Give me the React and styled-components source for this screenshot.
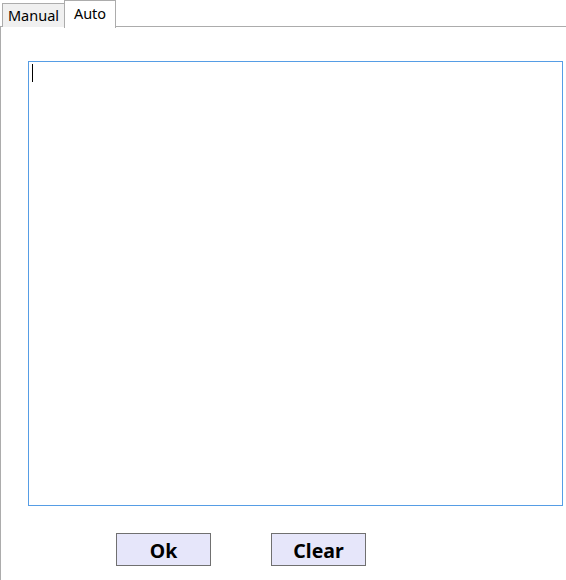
import React from 'react'
import styled, { createGlobalStyle } from 'styled-components'

const GlobalStyle = createGlobalStyle`
  html, body {
    margin: 0;
    padding: 0;
    background: #ffffff;
    overflow: hidden;
  }
  body {
    font-family: "Noto Sans", "Open Sans", sans-serif;
  }
`;

const Window = styled.div`
  width: 566px;
  height: 580px;
  overflow: hidden;
`;

const TabStrip = styled.div`
  display: flex;
  align-items: flex-end;
  height: 27px;
  padding-left: 2px;
  margin-bottom: -1px;
  position: relative;
  z-index: 1;
`;

const Tab = styled.div`
  box-sizing: border-box;
  height: ${p => (p.$active ? '28px' : '24px')};
  width: ${p => (p.$active ? '52px' : '63px')};
  margin-left: ${p => (p.$active ? '-1px' : '0')};
  margin-bottom: ${p => (p.$active ? '-1px' : '0')};
  border: 1px solid #acacac;
  border-bottom: none;
  background: ${p => (p.$active ? '#ffffff' : '#f0f0f0')};
  color: #000;
  font-size: 14.5px;
  line-height: ${p => (p.$active ? '24px' : '22px')};
  text-align: center;
  cursor: default;
`;

const Panel = styled.div`
  width: 568px;
  height: 600px;
  box-sizing: border-box;
  border: 1px solid #acacac;
  padding: 34px 0 0 27px;
  background: #ffffff;
`;

const EditorWrap = styled.div`
  position: relative;
  width: 535px;
  height: 445px;
`;

const Editor = styled.textarea`
  display: block;
  box-sizing: border-box;
  width: 100%;
  height: 100%;
  margin: 0;
  padding: 2px 3px;
  border: 1px solid #569de5;
  outline: none;
  resize: none;
  font-family: "Noto Sans", sans-serif;
  font-size: 14px;
  color: #000;
  caret-color: transparent;
`;

const Caret = styled.span`
  position: absolute;
  left: 4px;
  top: 3px;
  width: 1px;
  height: 18px;
  background: #000;
  pointer-events: none;
`;

const ButtonRow = styled.div`
  display: flex;
  gap: 60px;
  margin-top: 27px;
  padding-left: 88px;
`;

const Button = styled.button`
  box-sizing: border-box;
  width: 95px;
  height: 33px;
  margin: 0;
  padding: 0;
  border: 1px solid #707070;
  background: #e6e6fa;
  color: #000;
  font-family: "Noto Sans", sans-serif;
  font-weight: 700;
  font-size: 19.5px;
  line-height: 33px;
  cursor: pointer;
`;

export default function App() {
  return (
    <Window>
      <GlobalStyle />
      <TabStrip>
        <Tab>Manual</Tab>
        <Tab $active>Auto</Tab>
      </TabStrip>
      <Panel>
        <EditorWrap>
          <Editor defaultValue="" />
          <Caret />
        </EditorWrap>
        <ButtonRow>
          <Button>Ok</Button>
          <Button>Clear</Button>
        </ButtonRow>
      </Panel>
    </Window>
  );
}
